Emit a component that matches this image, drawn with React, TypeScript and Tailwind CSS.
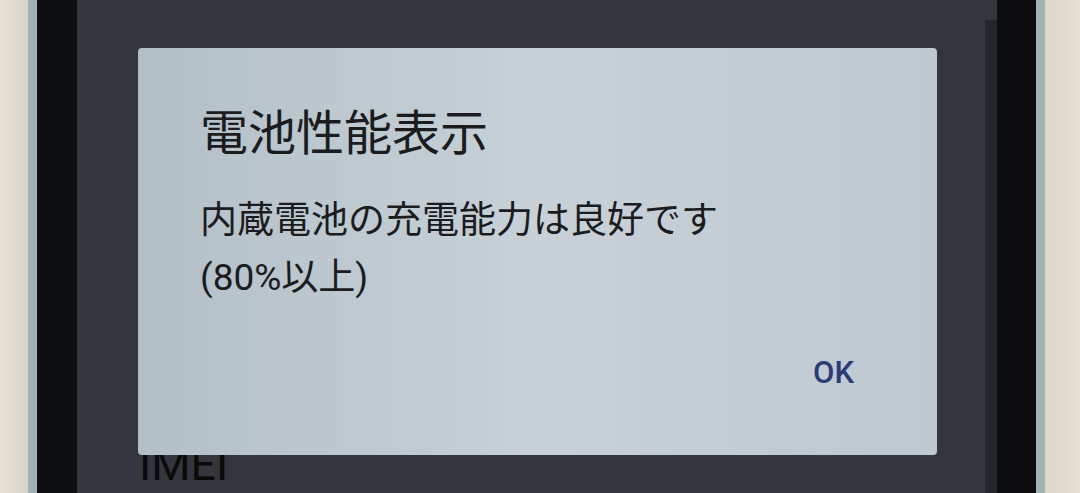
export default function App() {
  return (
    <div className="flex h-[493px] w-[1080px] overflow-hidden bg-[#e4ded2] font-['Roboto','Noto_Sans_CJK_JP',sans-serif]">
      <div className="w-[28px] shrink-0 bg-gradient-to-r from-[#e8e2d6] to-[#d9d4c8]" />
      <div className="w-[9px] shrink-0 bg-[#9db2b8]" />
      <div className="w-[40px] shrink-0 bg-[#0e0f10]" />

      {/* screen */}
      <div className="relative flex w-[920px] shrink-0 bg-[#33363d]">
        <div className="flex flex-1 flex-col justify-end pb-[6px] pl-[62px]">
          <span className="text-[45px] leading-[45px] text-[#0a0a0a]">IMEI</span>
        </div>
        <div className="mt-[20px] w-[12px] bg-[#23262b]" />

        {/* dialog overlay */}
        <div className="absolute left-[61px] top-[48px] flex h-[407px] w-[799px] flex-col rounded-[4px] bg-gradient-to-r from-[#b3bfc7] via-[#c7d1d7] to-[#bec9cf] px-[62px] pt-[62px] text-[#1b1c1e]">
          <h1 className="text-[48px] leading-[48px] font-normal">電池性能表示</h1>
          <p className="mt-[34px] text-[37px] leading-[57px]">
            内蔵電池の充電能力は良好です
            <br />
            (80%以上)
          </p>
          <div className="mt-[51px] flex justify-end pr-[21px]">
            <button className="text-[31px] leading-[31px] font-medium text-[#2b3a78]">OK</button>
          </div>
        </div>
      </div>

      <div className="w-[39px] shrink-0 bg-[#0c0d0e]" />
      <div className="w-[9px] shrink-0 bg-[#a0b3b8]" />
      <div className="flex-1 bg-gradient-to-r from-[#dcd7cb] to-[#e6e0d4]" />
    </div>
  );
}
